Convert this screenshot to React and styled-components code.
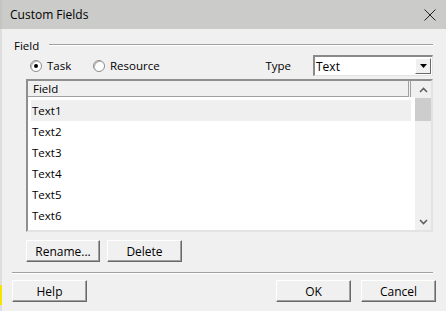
import React from 'react'
import styled, { createGlobalStyle } from 'styled-components'

const GlobalStyle = createGlobalStyle`
  html, body {
    margin: 0;
    padding: 0;
    background: #f0f0f0;
  }
  body {
    font-family: "Open Sans", "DejaVu Sans", sans-serif;
    font-size: 11.5px;
    color: #000;
  }
`

const Page = styled.div`
  display: flex;
  width: 446px;
  height: 311px;
  overflow: hidden;
`

const Edge = styled.div`
  width: 2px;
  flex: none;
  background: linear-gradient(
    to bottom,
    #c4c5c3 0px, #c4c5c3 29px,
    #dedede 29px, #dedede 285px,
    #f2e600 285px, #f2e600 305px,
    #dedede 305px
  );
`

const Dialog = styled.div`
  flex: 1;
  display: flex;
  flex-direction: column;
  background: #f0f0f0;
`

const TitleBar = styled.div`
  height: 29px;
  flex: none;
  display: flex;
  align-items: center;
  justify-content: space-between;
  padding: 0 8px 0 8px;
  background: #cbccc9;
  font-size: 12px;
`

const CloseButton = styled.div`
  width: 14px;
  height: 14px;
  display: flex;
  align-items: center;
  justify-content: center;
  margin-right: 1px;
`

const Body = styled.div`
  display: flex;
  flex-direction: column;
  padding: 8px 13px 0 10px;
`

const GroupHeader = styled.div`
  display: flex;
  align-items: center;
  height: 16px;
  padding-left: 2px;
  gap: 10px;
`

const GroupLine = styled.div`
  flex: 1;
  height: 0;
  border-top: 1px solid #a0a0a0;
  border-bottom: 1px solid #ffffff;
`

const OptionsRow = styled.div`
  display: flex;
  align-items: center;
  height: 21px;
  margin-top: 2px;
  padding-left: 18px;
`

const RadioOption = styled.label`
  display: flex;
  align-items: center;
  gap: 5px;
  width: ${p => p.$width}px;
`

const RadioCircle = styled.span`
  width: 10px;
  height: 10px;
  border-radius: 50%;
  background: #fff;
  border: 1px solid #8c8c8c;
  box-shadow: inset 1px 1px 0 #b8b8b8;
  display: flex;
  align-items: center;
  justify-content: center;

  &::after {
    content: '';
    width: 4px;
    height: 4px;
    border-radius: 50%;
    background: ${p => (p.$checked ? '#000' : 'transparent')};
  }
`

const TypeGroup = styled.div`
  margin-left: auto;
  display: flex;
  align-items: center;
  gap: 22px;
`

const SelectBox = styled.div`
  width: 120px;
  height: 21px;
  box-sizing: border-box;
  display: flex;
  align-items: center;
  background: #fff;
  border-top: 2px solid #8a8a8a;
  border-left: 2px solid #8a8a8a;
  border-right: 1px solid #e3e3e3;
  border-bottom: 1px solid #e3e3e3;
  padding-left: 1px;
  font-size: 12px;
`

const SelectValue = styled.span`
  flex: 1;
`

const DropButton = styled.div`
  width: 16px;
  height: 16px;
  box-sizing: border-box;
  margin-right: 1px;
  background: #f0f0f0;
  border-top: 1px solid #fff;
  border-left: 1px solid #fff;
  border-right: 1px solid #696969;
  border-bottom: 1px solid #696969;
  display: flex;
  align-items: center;
  justify-content: center;
`

const ListBox = styled.div`
  margin: 3px 0 0 14px;
  height: 153px;
  box-sizing: border-box;
  display: flex;
  border-top: 2px solid #8f8f8f;
  border-left: 2px solid #8f8f8f;
  border-right: 2px solid #e3e3e3;
  border-bottom: 2px solid #e3e3e3;
  background: #fff;
`

const ListMain = styled.div`
  flex: 1;
  display: flex;
  flex-direction: column;
`

const HeaderRow = styled.div`
  height: 16px;
  display: flex;
  background: #f0f0f0;
`

const HeaderCell = styled.div`
  flex: 1;
  box-sizing: border-box;
  border-bottom: 1px solid #a0a0a0;
  border-right: 1px solid #a0a0a0;
  padding-left: 5px;
  line-height: 15px;
`

const HeaderFiller = styled.div`
  width: 4px;
  border-left: 1px solid #a0a0a0;
  margin-left: 1px;
`

const Rows = styled.div`
  padding: 3px 4px 0 3px;
`

const Row = styled.div`
  height: 21px;
  line-height: 21px;
  padding-left: 1px;
  background: ${p => (p.$active ? '#efefef' : 'transparent')};
`

const ScrollBar = styled.div`
  width: 16px;
  background: #f0f0f0;
  display: flex;
  flex-direction: column;
`

const ScrollArrow = styled.div`
  height: 17px;
  display: flex;
  align-items: center;
  justify-content: center;
`

const ScrollThumb = styled.div`
  height: 23px;
  background: #cdcdcd;
`

const ScrollTrack = styled.div`
  flex: 1;
`

const ButtonRow = styled.div`
  display: flex;
  gap: 7px;
  margin: 8px 0 0 ${p => p.$indent || 0}px;
`

const Button = styled.button`
  width: ${p => p.$width || 75}px;
  height: 22px;
  box-sizing: border-box;
  padding: 0;
  font: inherit;
  font-size: 12px;
  color: #000;
  background: #f0f0f0;
  border-top: 1px solid #ffffff;
  border-left: 1px solid #ffffff;
  border-right: 1px solid #696969;
  border-bottom: 1px solid #696969;
  box-shadow: inset -1px -1px 0 #a0a0a0;
`

const Separator = styled.div`
  margin-top: 10px;
  height: 0;
  border-top: 1px solid #a0a0a0;
  border-bottom: 1px solid #ffffff;
`

const Footer = styled.div`
  display: flex;
  margin-top: 6px;
  margin-right: -3px;
  gap: 10px;
`

const Spacer = styled.div`
  flex: 1;
`

const rows = ['Text1', 'Text2', 'Text3', 'Text4', 'Text5', 'Text6']

export default function App() {
  return (
    <Page>
      <GlobalStyle />
      <Edge />
      <Dialog>
        <TitleBar>
          <span>Custom Fields</span>
          <CloseButton>
            <svg width="12" height="12" viewBox="0 0 12 12">
              <path d="M0.5 0.5 L11.5 11.5 M11.5 0.5 L0.5 11.5" stroke="#222" strokeWidth="1" />
            </svg>
          </CloseButton>
        </TitleBar>
        <Body>
          <GroupHeader>
            <span>Field</span>
            <GroupLine />
          </GroupHeader>
          <OptionsRow>
            <RadioOption $width={63}>
              <RadioCircle $checked />
              <span>Task</span>
            </RadioOption>
            <RadioOption $width={100}>
              <RadioCircle />
              <span>Resource</span>
            </RadioOption>
            <TypeGroup>
              <span>Type</span>
              <SelectBox>
                <SelectValue>Text</SelectValue>
                <DropButton>
                  <svg width="7" height="4" viewBox="0 0 7 4">
                    <path d="M0 0 H7 L3.5 4 Z" fill="#000" />
                  </svg>
                </DropButton>
              </SelectBox>
            </TypeGroup>
          </OptionsRow>
          <ListBox>
            <ListMain>
              <HeaderRow>
                <HeaderCell>Field</HeaderCell>
                <HeaderFiller />
              </HeaderRow>
              <Rows>
                {rows.map((r, i) => (
                  <Row key={r} $active={i === 0}>{r}</Row>
                ))}
              </Rows>
            </ListMain>
            <ScrollBar>
              <ScrollArrow>
                <svg width="9" height="6" viewBox="0 0 9 6">
                  <path d="M1 5 L4.5 1.5 L8 5" stroke="#606060" strokeWidth="1.6" fill="none" />
                </svg>
              </ScrollArrow>
              <ScrollThumb />
              <ScrollTrack />
              <ScrollArrow>
                <svg width="9" height="6" viewBox="0 0 9 6">
                  <path d="M1 1 L4.5 4.5 L8 1" stroke="#606060" strokeWidth="1.6" fill="none" />
                </svg>
              </ScrollArrow>
            </ScrollBar>
          </ListBox>
          <ButtonRow $indent={14}>
            <Button $width={74}>Rename...</Button>
            <Button>Delete</Button>
          </ButtonRow>
          <Separator />
          <Footer>
            <Button>Help</Button>
            <Spacer />
            <Button>OK</Button>
            <Button>Cancel</Button>
          </Footer>
        </Body>
      </Dialog>
    </Page>
  )
}
